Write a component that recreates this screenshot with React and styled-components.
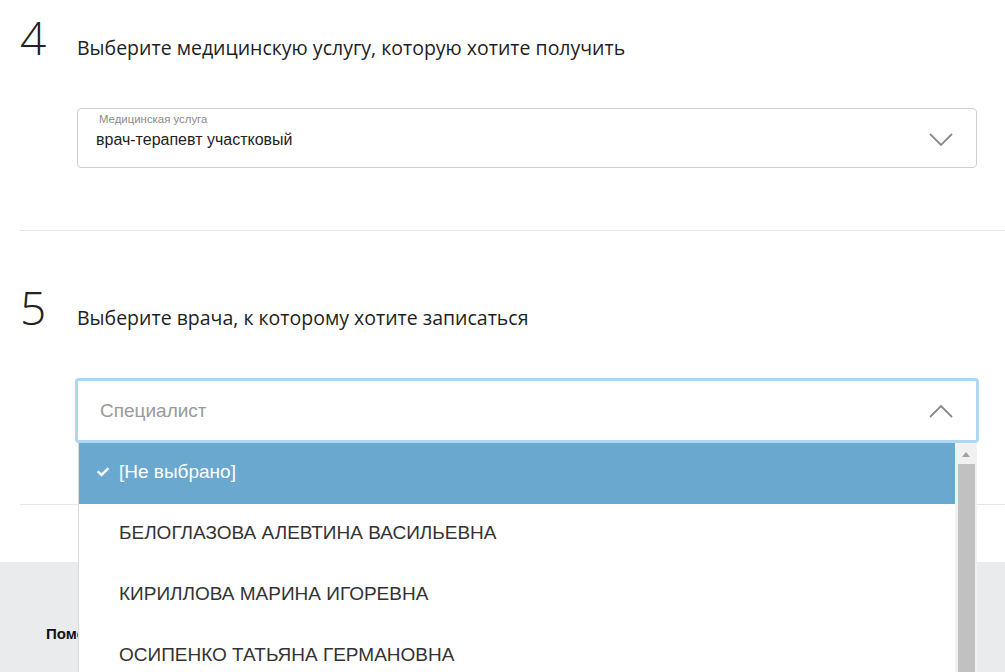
import React from "react";
import styled, { createGlobalStyle } from "styled-components";
import { FaCheck } from "react-icons/fa";

const doctors = [
  "БЕЛОГЛАЗОВА АЛЕВТИНА ВАСИЛЬЕВНА",
  "КИРИЛЛОВА МАРИНА ИГОРЕВНА",
  "ОСИПЕНКО ТАТЬЯНА ГЕРМАНОВНА",
];

function Chevron({ up }) {
  return (
    <ChevronIcon $up={up} width="24" height="14" viewBox="0 0 24 14">
      <polyline
        points={up ? "1,13 12,2 23,13" : "1,1 12,12 23,1"}
        fill="none"
        stroke="#8a8a8a"
        strokeWidth="1.8"
      />
    </ChevronIcon>
  );
}

export default function App() {
  return (
    <Page>
      <GlobalStyle />
      <Section $top="14px" $bottom="62px">
        <StepHead>
          <StepNum>4</StepNum>
          <StepTitle>Выберите медицинскую услугу, которую хотите получить</StepTitle>
        </StepHead>
        <FieldWrap>
          <SelectBox>
            <SelectTexts>
              <SelectLabel>Медицинская услуга</SelectLabel>
              <SelectValue>врач-терапевт участковый</SelectValue>
            </SelectTexts>
            <Chevron />
          </SelectBox>
        </FieldWrap>
      </Section>

      <Section $top="53px" $bottom="61px">
        <StepHead>
          <StepNum>5</StepNum>
          <StepTitle>Выберите врача, к которому хотите записаться</StepTitle>
        </StepHead>
        <FieldWrap>
          <SelectBox $focused>
            <Placeholder>Специалист</Placeholder>
            <Chevron up />
          </SelectBox>
          <Dropdown>
            <OptionList>
              <Option $selected>
                <CheckSlot>
                  <FaCheck size={12} />
                </CheckSlot>
                [Не выбрано]
              </Option>
              {doctors.map((name) => (
                <Option key={name}>
                  <CheckSlot />
                  {name}
                </Option>
              ))}
            </OptionList>
            <ScrollTrack>
              <ScrollArrow />
              <ScrollThumb />
            </ScrollTrack>
          </Dropdown>
        </FieldWrap>
      </Section>

      <Footer>
        <FooterTitle>Помощь</FooterTitle>
      </Footer>
    </Page>
  );
}

const GlobalStyle = createGlobalStyle`
  html, body {
    margin: 0;
    overflow: hidden;
    background: #fff;
  }
  body {
    font-family: "Open Sans", "Liberation Sans", sans-serif;
  }
`;

const Page = styled.div`
  width: 1005px;
  height: 672px;
  display: flex;
  flex-direction: column;
  overflow: hidden;
`;

const Section = styled.div`
  margin-left: 20px;
  padding: ${(props) => props.$top} 28px ${(props) => props.$bottom} 0;
  border-bottom: 1px solid #e6e6e6;
`;

const StepHead = styled.div`
  display: flex;
  align-items: baseline;
`;

const StepNum = styled.div`
  width: 57px;
  font-size: 46px;
  line-height: 46px;
  font-weight: 300;
  color: #222;
`;

const StepTitle = styled.div`
  font-size: 19.5px;
  color: #1e1e1e;
`;

const FieldWrap = styled.div`
  position: relative;
  margin: 47px 0 0 57px;
`;

const SelectBox = styled.div`
  display: flex;
  align-items: center;
  box-sizing: border-box;
  height: ${(props) => (props.$focused ? "65px" : "60px")};
  margin: ${(props) => (props.$focused ? "0 -2px" : "0")};
  padding: 0 23px 0 ${(props) => (props.$focused ? "22px" : "18px")};
  border: ${(props) =>
    props.$focused ? "3px solid #aed8f1" : "1px solid #cfcfcf"};
  border-radius: 4px;
  background: #fff;
  font-family: "Liberation Sans", Arial, sans-serif;
`;

const SelectTexts = styled.div`
  flex: 1;
  align-self: flex-start;
  display: flex;
  flex-direction: column;
  padding-top: 4px;
`;

const SelectLabel = styled.div`
  margin-left: 3px;
  font-size: 11.4px;
  line-height: 12px;
  color: #8a8a8a;
`;

const SelectValue = styled.div`
  margin-top: 5px;
  font-size: 16px;
  line-height: 20px;
  color: #222;
`;

const Placeholder = styled.div`
  flex: 1;
  font-size: 19px;
  line-height: 22px;
  color: #9a9a9a;
`;

const ChevronIcon = styled.svg`
  display: block;
  flex: none;
  margin-top: ${(props) => (props.$up ? "0" : "3px")};
`;

const Dropdown = styled.div`
  position: absolute;
  top: 100%;
  left: 1px;
  right: 0;
  height: 240px;
  display: flex;
  overflow: hidden;
  background: #fff;
  border-left: 1px solid #dcdcdc;
  z-index: 2;
`;

const OptionList = styled.div`
  flex: 1;
  display: flex;
  flex-direction: column;
`;

const Option = styled.div`
  display: flex;
  align-items: center;
  flex: none;
  height: 61px;
  padding: 0 0 4px 18px;
  box-sizing: border-box;
  font-family: "Liberation Sans", Arial, sans-serif;
  font-size: 19px;
  color: ${(props) => (props.$selected ? "#fff" : "#333")};
  background: ${(props) => (props.$selected ? "#6aa8d0" : "#fff")};
`;

const CheckSlot = styled.span`
  width: 22px;
  display: flex;
  align-items: center;
`;

const ScrollTrack = styled.div`
  width: 22px;
  display: flex;
  flex-direction: column;
  align-items: center;
  background: #f1f1f1;
`;

const ScrollArrow = styled.div`
  margin: 9px 0 7px;
  width: 0;
  height: 0;
  border-left: 4px solid transparent;
  border-right: 4px solid transparent;
  border-bottom: 5px solid #a3a3a3;
`;

const ScrollThumb = styled.div`
  flex: 1;
  width: 17px;
  background: #c1c1c1;
`;

const Footer = styled.div`
  flex: 1;
  margin-top: 57px;
  padding: 63px 0 0 46px;
  background: #e9ebec;
`;

const FooterTitle = styled.div`
  font-family: "Liberation Sans", Arial, sans-serif;
  font-size: 15px;
  font-weight: 700;
  color: #111;
`;
